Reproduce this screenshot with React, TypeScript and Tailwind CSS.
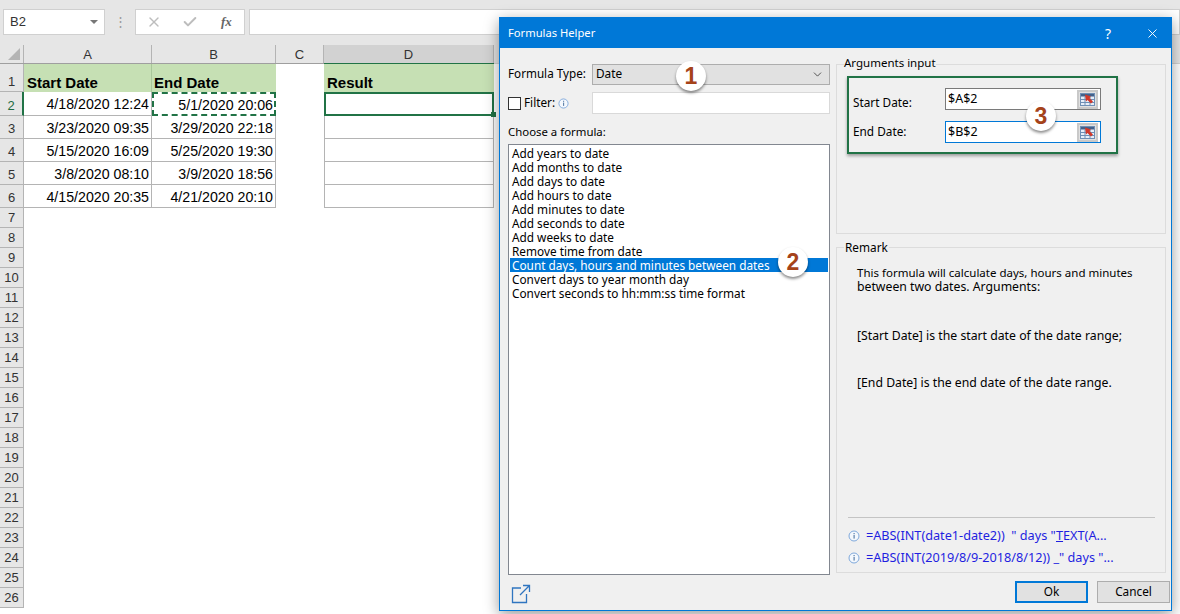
import React from "react";
import { ChevronDown, X, Check } from "lucide-react";

const rowHeights = [28, 24, 23, 23, 23, 23, 20, 20, 20, 20, 20, 20, 20, 20, 20, 20, 20, 20, 20, 20, 20, 20, 20, 20, 20, 20];

const data = [
  ["4/18/2020 12:24", "5/1/2020 20:06"],
  ["3/23/2020 09:35", "3/29/2020 22:18"],
  ["5/15/2020 16:09", "5/25/2020 19:30"],
  ["3/8/2020 08:10", "3/9/2020 18:56"],
  ["4/15/2020 20:35", "4/21/2020 20:10"],
];

const formulas = [
  "Add years to date",
  "Add months to date",
  "Add days to date",
  "Add hours to date",
  "Add minutes to date",
  "Add seconds to date",
  "Add weeks to date",
  "Remove time from date",
  "Count days, hours and minutes between dates",
  "Convert days to year month day",
  "Convert seconds to hh:mm:ss time format",
];

const ui = "font-['Noto_Sans',sans-serif]";
const sheet = "font-['Liberation_Sans',Arial,sans-serif]";

function InfoIcon({ size = 12 }: { size?: number }) {
  return (
    <svg width={size} height={size} viewBox="0 0 12 12" className="shrink-0">
      <circle cx="6" cy="6" r="5" fill="#f4f8fd" stroke="#7fa9dc" strokeWidth="1" />
      <rect x="5.5" y="5" width="1.2" height="3.6" fill="#5b7fa8" />
      <rect x="5.5" y="3" width="1.2" height="1.2" fill="#5b7fa8" />
    </svg>
  );
}

function RangeIcon() {
  return (
    <div className="w-[21px] h-[19px] shrink-0 bg-[#e1e1e1] border-2 border-[#c9c9c9] flex items-center justify-center">
      <svg width="15" height="13" viewBox="0 0 15 13">
        <rect x="0.5" y="0.5" width="14" height="12" fill="#e6eef8" stroke="#6f8fb5" />
        <rect x="1" y="1" width="13" height="2.5" fill="#44618a" />
        <path d="M0.5 6.5H14.5M0.5 9.5H14.5M5 3.5V12.5M10 3.5V12.5" stroke="#6f8fb5" strokeWidth="1" fill="none" />
        <path d="M5 1.5L11 3.5L9.5 5L13 8.5L11 10.5L7.5 7L6 8.5Z" fill="#d2382a" />
      </svg>
    </div>
  );
}

function Callout({ n, className }: { n: number; className: string }) {
  return (
    <div
      className={`absolute w-[30px] h-[30px] rounded-full bg-white shadow-[0_2px_3px_rgba(0,0,0,0.45)] flex items-center justify-center text-[#a5431a] text-[23px] font-bold ${sheet} ${className}`}
    >
      {n}
    </div>
  );
}

function Sheet() {
  const colHead = "h-[18px] pt-[2px] flex items-center justify-center border-r border-[#b4b4b4] text-[13px] text-[#333]";
  const headCell = "bg-[#c6e0b4] flex items-end text-[15px] leading-[18px] font-bold text-black";
  return (
    <div className={`flex flex-col ${sheet} bg-white`}>
      {/* column headers */}
      <div className="flex h-[18px] bg-[#e6e6e6]">
        <div className="w-[24px] relative border-r border-[#b4b4b4] overflow-hidden">
          <div className="absolute right-[3px] bottom-[3px] w-0 h-0 border-l-[12px] border-l-transparent border-b-[12px] border-b-[#b4b4b4]" />
        </div>
        <div className={`w-[128px] ${colHead}`}>A</div>
        <div className={`w-[124px] ${colHead}`}>B</div>
        <div className={`w-[48px] ${colHead}`}>C</div>
        <div className={`w-[170px] ${colHead} bg-[#d2d2d2] text-[#1e6b41]`}>D</div>
        <div className="flex-1" />
      </div>
      <div className="flex h-[1px]">
        <div className="w-[324px] bg-[#9f9f9f]" />
        <div className="w-[170px] bg-[#217346]" />
        <div className="flex-1 bg-[#d4d4d4]" />
      </div>
      {rowHeights.map((h, i) => {
        const row = i + 1;
        const values = row >= 2 && row <= 6 ? data[row - 2] : null;
        const boxed = row <= 6;
        return (
          <div key={row} className="flex" style={{ height: h }}>
            <div
              className={`w-[24px] shrink-0 bg-[#e6e6e6] border-r border-b border-[#b4b4b4] flex items-end justify-center text-[13px] ${
                row === 2 ? "bg-[#d2d2d2] text-[#1e6b41] border-r-2 border-r-[#217346]" : "text-[#333]"
              }`}
            >
              {row}
            </div>
            {row === 1 && (
              <>
                <div className={`w-[128px] border-r border-[#a9c79a] pl-[3px] ${headCell}`}>Start Date</div>
                <div className={`w-[124px] pl-[2px] ${headCell}`}>End Date</div>
                <div className="w-[48px]" />
                <div className={`w-[170px] pl-[3px] ${headCell}`}>Result</div>
              </>
            )}
            {values && (
              <>
                <div className="w-[128px] border-r border-b border-[#b4b4b4] flex items-center justify-end pr-[2px] pt-[3px] text-[14.2px] text-black">{values[0]}</div>
                <div
                  className={`w-[124px] flex items-center justify-end pt-[3px] text-[14.2px] text-black ${
                    row === 2 ? "border-2 border-dashed border-[#217346] pr-[1px]" : "border-r border-b border-[#b4b4b4] pr-[2px]"
                  }`}
                >
                  {values[1]}
                </div>
                <div className="w-[48px]" />
                <div
                  className={`w-[170px] ${
                    row === 2 ? "relative border-2 border-[#217346]" : "border-x border-b border-[#b4b4b4]"
                  }`}
                >
                  {row === 2 && <div className="absolute -right-[4px] -bottom-[3px] w-[5px] h-[5px] bg-[#217346]" />}
                </div>
              </>
            )}
            {!boxed && <div className="flex-1" />}
          </div>
        );
      })}
    </div>
  );
}

function Dialog() {
  return (
    <div className={`absolute left-[499px] top-[17px] w-[673px] h-[594px] flex flex-col bg-[#f0f0f0] border border-[#0078d7] shadow-[0_4px_14px_rgba(0,0,0,0.4)] ${ui} text-[11.8px] text-black`}>
      <div className="h-[30px] shrink-0 bg-[#0078d7] text-white flex items-center pl-[8px]">
        <span className="flex-1 text-[11.2px]">Formulas Helper</span>
        <span className="w-[20px] text-center text-[14px] mr-[27px]">?</span>
        <X className="w-[15px] h-[15px] mr-[11px]" strokeWidth={1.5} />
      </div>
      <div className="flex-1 flex pl-[8px] pr-[4px] pt-[16px] gap-[6px]">
        {/* left */}
        <div className="w-[322px] flex flex-col">
          <div className="flex items-center h-[20px]">
            <span className="w-[84px] text-[11.7px]">Formula Type:</span>
            <div className="flex-1 h-[21px] bg-[#e1e1e1] border border-[#adadad] flex items-center pl-[3px] pr-[5px]">
              <span className="flex-1">Date</span>
              <ChevronDown className="w-[13px] h-[13px] text-[#333]" strokeWidth={1.5} />
            </div>
          </div>
          <div className="flex items-center h-[22px] mt-[8px]">
            <div className="w-[84px] flex items-center">
              <div className="w-[13px] h-[13px] bg-white border border-[#333] mr-[3px]" />
              <span className="mr-[3px]">Filter:</span>
              <InfoIcon size={11} />
            </div>
            <div className="flex-1 h-[22px] bg-white border border-[#d9d9d9]" />
          </div>
          <div className="mt-[9px] h-[21px] leading-[18px] text-[11.4px]">Choose a formula:</div>
          <div className="w-full h-[431px] bg-white border border-[#828790] pt-[1px] px-px">
            {formulas.map((f, i) => (
              <div key={f} className={`h-[14px] leading-[14px] pl-[2px] whitespace-nowrap ${i === 8 ? "bg-[#0078d7] text-white" : ""}`}>
                {f}
              </div>
            ))}
          </div>
          <svg width="20" height="20" viewBox="0 0 20 20" className="mt-[9px] ml-[3px]" fill="none" stroke="#2f75c0" strokeWidth="1.3">
            <path d="M10 4H1.5V18.5H15.5V10" />
            <path d="M12 1.5H18.5V8M18 2L9 11" />
          </svg>
        </div>
        {/* right */}
        <div className="flex-1 flex flex-col">
          <div className="relative h-[170px] border border-[#dcdcdc] mr-[1px]">
            <span className="absolute -top-[9px] left-[7px] bg-[#f0f0f0] leading-[14px] text-[11.5px]">Arguments input</span>
            <div className="absolute left-[10px] top-[11px] w-[271px] h-[78px] border-2 border-[#217346] shadow-[0_2px_3px_rgba(0,0,0,0.35)] pl-[4px] pt-[10px] flex flex-col gap-[11px]">
              <div className="flex items-center h-[22px]">
                <span className="w-[92px] pt-[7px]">Start Date:</span>
                <div className="w-[156px] h-[22px] bg-white border border-[#7a7a7a] flex items-center pl-[2px] pr-[2px]">
                  <span className="flex-1 text-[12.5px]">$A$2</span>
                  <RangeIcon />
                </div>
              </div>
              <div className="flex items-center h-[22px]">
                <span className="w-[92px]">End Date:</span>
                <div className="w-[156px] h-[22px] bg-white border border-[#0078d7] flex items-center pl-[2px] pr-[2px]">
                  <span className="flex-1 text-[12.5px]">$B$2</span>
                  <RangeIcon />
                </div>
              </div>
            </div>
          </div>
          <div className="relative mt-[13px] h-[326px] border border-[#dcdcdc] mr-[1px] flex flex-col">
            <span className="absolute -top-[8px] left-[7px] bg-[#f0f0f0] leading-[14px] px-px">Remark</span>
            <div className="pl-[20px] pr-[10px] pt-[18px] leading-[14px] text-[12.25px]">
              <p>
                <span className="text-[11.5px]">This formula will calculate days, hours and minutes</span>
                <br />
                between two dates. Arguments:
              </p>
              <p className="mt-[35px]">[Start Date] is the start date of the date range;</p>
              <p className="mt-[33px]">[End Date] is the end date of the date range.</p>
            </div>
            <div className="mt-auto ml-[11px] mr-[10px] border-t border-[#c4c4c4] pt-[10px] pb-[6px] text-[12.7px] text-[#1f1fe0] flex flex-col gap-[6px]">
              <div className="flex items-center gap-[6px] h-[16px]">
                <InfoIcon />
                <span className="whitespace-nowrap">=ABS(INT(date1-date2)) &nbsp;" days "<span className="underline">T</span>EXT(A...</span>
              </div>
              <div className="flex items-center gap-[6px] h-[16px]">
                <InfoIcon />
                <span className="whitespace-nowrap">=ABS(INT(2019/8/9-2018/8/12)) _" days "...</span>
              </div>
            </div>
          </div>
          <div className="flex justify-end gap-[9px] mt-[8px] -mr-[3px]">
            <div className="w-[73px] h-[22px] bg-[#e1e1e1] border-2 border-[#0078d7] flex items-center justify-center">Ok</div>
            <div className="w-[73px] h-[22px] bg-[#e1e1e1] border border-[#adadad] flex items-center justify-center">Cancel</div>
          </div>
        </div>
      </div>
    </div>
  );
}

export default function App() {
  return (
    <div className="relative w-[1180px] h-[614px] overflow-hidden bg-white">
      <div className="h-[45px] bg-[#e6e6e6] flex items-center pl-[3px] pb-[2px]">
        <div className="w-[102px] h-[26px] bg-white border border-[#d0d0d0] flex items-center pl-[6px] pr-[6px] text-[13px] text-[#333] font-['Liberation_Sans',sans-serif]">
          <span className="flex-1">B2</span>
          <span className="w-0 h-0 border-l-[4px] border-r-[4px] border-t-[4px] border-l-transparent border-r-transparent border-t-[#777]" />
        </div>
        <span className="w-[30px] text-center text-[#999] text-[13px] leading-none">⋮</span>
        <div className="w-[110px] h-[26px] bg-white border border-[#d0d0d0] flex items-center pl-[10px] gap-[20px]">
          <X className="w-[16px] h-[16px] text-[#bdbdbd]" strokeWidth={2} />
          <Check className="w-[16px] h-[16px] text-[#bdbdbd]" strokeWidth={3} />
          <span className="ml-[3px] text-[13px] italic font-bold text-[#666] font-['Liberation_Serif',serif]">fx</span>
        </div>
        <div className="flex-1 h-[26px] ml-[4px] bg-white border border-[#d0d0d0]" />
      </div>
      <Sheet />
      <Dialog />
      <Callout n={1} className="left-[676px] top-[61px]" />
      <Callout n={2} className="left-[778px] top-[247px]" />
      <Callout n={3} className="left-[1026px] top-[101px]" />
    </div>
  );
}
